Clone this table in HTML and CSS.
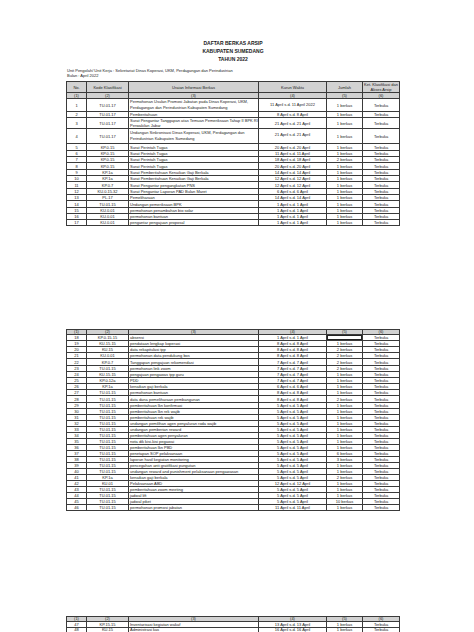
FILE: index.html
```html
<!DOCTYPE html>
<html lang="id">
<head>
<meta charset="utf-8">
<title>Daftar Berkas Arsip</title>
<link rel="stylesheet" href="styles.css">
</head>
<body>
<div class="page">
  <section class="sheet sheet1">
    <header class="title">
      <div>DAFTAR BERKAS ARSIP</div>
      <div>KABUPATEN SUMEDANG</div>
      <div>TAHUN 2022</div>
    </header>
    <div class="meta">
      <div>Unit Pengolah/ Unit Kerja : Sekretariat Dinas Koperasi, UKM, Perdagangan dan Perindustrian</div>
      <div>Bulan : April 2022</div>
    </div>
    <div class="tbl">
      <div class="row head">
        <div>No.</div><div>Kode Klasifikasi</div><div>Uraian Informasi Berkas</div><div>Kurun Waktu</div><div>Jumlah</div><div class="ml">Ket. Klasifikasi dan<br>Akses Arsip</div>
      </div>
      <div class="row nums"><div>(1)</div><div>(2)</div><div>(3)</div><div>(4)</div><div>(5)</div><div>(6)</div></div>
      <div class="row h13"><div>1</div><div>TU.01.17</div><div class="u ml">Permohonan Usulan Promosi Jabatan pada Dinas Koperasi, UKM,<br>Perdagangan dan Perindustrian Kabupaten Sumedang</div><div class="top">11 April s.d. 11 April 2022</div><div>1 berkas</div><div>Terbuka</div></div>
      <div class="row"><div>2</div><div>TU.01.17</div><div class="u">Pemberitahuan</div><div>8 April s.d. 8 April</div><div>1 berkas</div><div>Terbuka</div></div>
      <div class="row h11"><div>3</div><div>TU.01.17</div><div class="u ml">Surat Pengantar Tanggapan atas Temuan Pemeriksaan Tahap II BPK RI<br>Perwakilan Jabar</div><div class="top">21 April s.d. 21 April</div><div>1 berkas</div><div>Terbuka</div></div>
      <div class="row h15"><div>4</div><div>TU.01.17</div><div class="u ml">Undangan Sinkronisasi Dinas Koperasi, UKM, Perdagangan dan<br>Perindustrian Kabupaten Sumedang</div><div class="top">21 April s.d. 21 April</div><div>1 berkas</div><div>Terbuka</div></div>
      <div class="row h7"><div>5</div><div>KP.0.15</div><div class="u">Surat Perintah Tugas</div><div>20 April s.d. 20 April</div><div>1 berkas</div><div>Terbuka</div></div>
      <div class="row"><div>6</div><div>KP.0.15</div><div class="u">Surat Perintah Tugas</div><div>11 April s.d. 11 April</div><div>1 berkas</div><div>Terbuka</div></div>
      <div class="row"><div>7</div><div>KP.0.15</div><div class="u">Surat Perintah Tugas</div><div>18 April s.d. 18 April</div><div>2 berkas</div><div>Terbuka</div></div>
      <div class="row h7"><div>8</div><div>KP.0.15</div><div class="u">Surat Perintah Tugas</div><div>20 April s.d. 20 April</div><div>1 berkas</div><div>Terbuka</div></div>
      <div class="row"><div>9</div><div>KP.1a</div><div class="u">Surat Pemberitahuan Kenaikan Gaji Berkala</div><div>14 April s.d. 14 April</div><div>1 berkas</div><div>Terbuka</div></div>
      <div class="row"><div>10</div><div>KP.1a</div><div class="u">Surat Pemberitahuan Kenaikan Gaji Berkala</div><div>12 April s.d. 12 April</div><div>1 berkas</div><div>Terbuka</div></div>
      <div class="row h7"><div>11</div><div>KP.0.7</div><div class="u">Surat Pengantar pengangkatan PNS</div><div>12 April s.d. 12 April</div><div>1 berkas</div><div>Terbuka</div></div>
      <div class="row"><div>12</div><div>KU.0.15.32</div><div class="u">Surat Pengantar Laporan PAD Bulan Maret</div><div>6 April s.d. 6 April</div><div>1 berkas</div><div>Terbuka</div></div>
      <div class="row"><div>13</div><div>PL.17</div><div class="u">Pemeliharaan</div><div>14 April s.d. 14 April</div><div>1 berkas</div><div>Terbuka</div></div>
      <div class="row h7"><div>14</div><div>TU.01.15</div><div class="u">Undangan pemeriksaan BPK</div><div>1 April s.d. 1 April</div><div>1 berkas</div><div>Terbuka</div></div>
      <div class="row"><div>15</div><div>KU.0.01</div><div class="u">permohonan penambahan bio solar</div><div>1 April s.d. 1 April</div><div>1 berkas</div><div>Terbuka</div></div>
      <div class="row"><div>16</div><div>KU.0.01</div><div class="u">permohonan bantuan</div><div>1 April s.d. 1 April</div><div>1 berkas</div><div>Terbuka</div></div>
      <div class="row"><div>17</div><div>KU.0.01</div><div class="u">pengantar pengajuan proposal</div><div>1 April s.d. 1 April</div><div>1 berkas</div><div>Terbuka</div></div>
    </div>
  </section>

  <section class="sheet sheet2">
    <div class="tbl">
      <div class="row nums n5"><div>(1)</div><div>(2)</div><div>(3)</div><div>(4)</div><div>(5)</div><div>(6)</div></div>
      <div class="row"><div>18</div><div>KP.0.15.15</div><div class="u">absensi</div><div>1 April s.d. 1 April</div><div class="sel"></div><div>Terbuka</div></div>
      <div class="row"><div>19</div><div>KU.15.15</div><div class="u">pendataan lengkap koperasi</div><div>8 April s.d. 8 April</div><div>1 berkas</div><div>Terbuka</div></div>
      <div class="row"><div>20</div><div>KU.15</div><div class="u">data rekapitulasi tpp</div><div>8 April s.d. 8 April</div><div>2 berkas</div><div>Terbuka</div></div>
      <div class="row"><div>21</div><div>KU.0.01</div><div class="u">permohonan data pendukung bos</div><div>8 April s.d. 8 April</div><div>2 berkas</div><div>Terbuka</div></div>
      <div class="row h7"><div>22</div><div>KP.0.7</div><div class="u">Tanggapan pengajuan rekomendasi</div><div>7 April s.d. 7 April</div><div>2 berkas</div><div>Terbuka</div></div>
      <div class="row"><div>23</div><div>TU.01.15</div><div class="u">permohonan link zoom</div><div>7 April s.d. 7 April</div><div>2 berkas</div><div>Terbuka</div></div>
      <div class="row"><div>24</div><div>KU.15.15</div><div class="u">pengajuan pengawas tpp guru</div><div>7 April s.d. 7 April</div><div>1 berkas</div><div>Terbuka</div></div>
      <div class="row"><div>25</div><div>KP.0.12a</div><div class="u">PDD</div><div>7 April s.d. 7 April</div><div>1 berkas</div><div>Terbuka</div></div>
      <div class="row"><div>26</div><div>KP.1a</div><div class="u">kenaikan gaji berkala</div><div>6 April s.d. 6 April</div><div>1 berkas</div><div>Terbuka</div></div>
      <div class="row"><div>27</div><div>TU.01.15</div><div class="u">permohonan bantuan</div><div>8 April s.d. 8 April</div><div>1 berkas</div><div>Terbuka</div></div>
      <div class="row h7"><div>28</div><div>TU.01.15</div><div class="u">data dana pemeliharaan pembangunan</div><div>8 April s.d. 8 April</div><div>2 berkas</div><div>Terbuka</div></div>
      <div class="row"><div>29</div><div>TU.01.15</div><div class="u">pemberitahuan lkn konfirmasi</div><div>5 April s.d. 5 April</div><div>1 berkas</div><div>Terbuka</div></div>
      <div class="row"><div>30</div><div>TU.01.15</div><div class="u">pemberitahuan lkn rek wajib</div><div>5 April s.d. 5 April</div><div>1 berkas</div><div>Terbuka</div></div>
      <div class="row"><div>31</div><div>TU.01.15</div><div class="u">pemberitahuan rek wajib</div><div>5 April s.d. 5 April</div><div>1 berkas</div><div>Terbuka</div></div>
      <div class="row"><div>32</div><div>TU.01.15</div><div class="u">undangan pemilihan agen penyaluran roda wajib</div><div>5 April s.d. 5 April</div><div>1 berkas</div><div>Terbuka</div></div>
      <div class="row"><div>33</div><div>TU.01.15</div><div class="u">undangan pemberian reward</div><div>5 April s.d. 5 April</div><div>1 berkas</div><div>Terbuka</div></div>
      <div class="row"><div>34</div><div>TU.01.15</div><div class="u">pemberitahuan agen penyaluran</div><div>5 April s.d. 5 April</div><div>1 berkas</div><div>Terbuka</div></div>
      <div class="row"><div>35</div><div>TU.01.15</div><div class="u">nota dik kisi-kisi pegawai</div><div>5 April s.d. 5 April</div><div>1 berkas</div><div>Terbuka</div></div>
      <div class="row"><div>36</div><div>TU.01.15</div><div class="u">pemberitahuan lkn PBD</div><div>5 April s.d. 5 April</div><div>1 berkas</div><div>Terbuka</div></div>
      <div class="row"><div>37</div><div>TU.01.15</div><div class="u">penetapan SOP pelaksanaan</div><div>5 April s.d. 5 April</div><div>6 berkas</div><div>Terbuka</div></div>
      <div class="row"><div>38</div><div>TU.01.15</div><div class="u">laporan hasil kegiatan monitoring</div><div>5 April s.d. 5 April</div><div>3 berkas</div><div>Terbuka</div></div>
      <div class="row"><div>39</div><div>TU.01.15</div><div class="u">pencegahan anti gratifikasi pungutan</div><div>5 April s.d. 5 April</div><div>1 berkas</div><div>Terbuka</div></div>
      <div class="row"><div>40</div><div>TU.01.15</div><div class="u">undangan reward and punishment pelaksanaan pengawasan</div><div>5 April s.d. 5 April</div><div>1 berkas</div><div>Terbuka</div></div>
      <div class="row"><div>41</div><div>KP.1a</div><div class="u">kenaikan gaji berkala</div><div>5 April s.d. 5 April</div><div>2 berkas</div><div>Terbuka</div></div>
      <div class="row"><div>42</div><div>KU.01</div><div class="u">Pelaksanaan ABD</div><div>12 April s.d. 12 April</div><div>1 berkas</div><div>Terbuka</div></div>
      <div class="row"><div>43</div><div>TU.01.15</div><div class="u">pemberitahuan zoom meeting</div><div>5 April s.d. 5 April</div><div>1 berkas</div><div>Terbuka</div></div>
      <div class="row"><div>44</div><div>TU.01.15</div><div class="u">jadwal lift</div><div>5 April s.d. 5 April</div><div>1 berkas</div><div>Terbuka</div></div>
      <div class="row"><div>45</div><div>TU.01.15</div><div class="u">jadwal piket</div><div>5 April s.d. 5 April</div><div>10 berkas</div><div>Terbuka</div></div>
      <div class="row"><div>46</div><div>TU.01.15</div><div class="u">permohonan promosi jabatan</div><div>11 April s.d. 11 April</div><div>1 berkas</div><div>Terbuka</div></div>
    </div>
  </section>

  <section class="sheet sheet3">
    <div class="tbl">
      <div class="row nums n5"><div>(1)</div><div>(2)</div><div>(3)</div><div>(4)</div><div>(5)</div><div>(6)</div></div>
      <div class="row"><div>47</div><div>KP.15.15</div><div class="u">Inventarisasi kegiatan wakaf</div><div>13 April s.d. 13 April</div><div>1 berkas</div><div>Terbuka</div></div>
      <div class="row last"><div>48</div><div>KU.15</div><div class="u">Administrasi kas</div><div>16 April s.d. 16 April</div><div>1 berkas</div><div>Terbuka</div></div>
    </div>
  </section>
</div>
</body>
</html>
```

FILE: styles.css
```css
html, body {
  margin: 0;
  padding: 0;
  background: #ffffff;
  overflow: hidden;
}

body {
  font-family: "Liberation Sans Narrow", "Liberation Sans", Arial, sans-serif;
  color: #222222;
}

.page {
  width: 474px;
  height: 632px;
  overflow: hidden;
}

.sheet {
  width: 334px;
  margin-left: 66px;
}

.sheet1 {
  padding-top: 39px;
}

.sheet2 {
  margin-top: 103px;
}

.sheet3 {
  margin-top: 105px;
}

.title {
  text-align: center;
  font-weight: bold;
  font-size: 5px;
  line-height: 8px;
  color: #1a1a1a;
}

.meta {
  margin-top: 5px;
  font-size: 4px;
  line-height: 5px;
  padding-left: 1px;
}

.tbl {
  border-top: 1px solid #3a3a3a;
  border-left: 1px solid #3a3a3a;
}

.sheet1 .tbl {
  margin-top: 3px;
}

.row {
  display: grid;
  grid-template-columns: 20px 42px 130px 68px 36px 37px;
  height: 6px;
  font-size: 4px;
  line-height: 5px;
}

.row > div {
  border-right: 1px solid #3a3a3a;
  border-bottom: 1px solid #3a3a3a;
  display: flex;
  align-items: center;
  justify-content: center;
  text-align: center;
  overflow: hidden;
  white-space: nowrap;
}

.row > .u {
  justify-content: flex-start;
  text-align: left;
  padding-left: 1px;
}

.row > .ml {
  line-height: 5px;
}

.row > .top {
  align-items: flex-start;
  padding-top: 3px;
}

.head {
  height: 11px;
  background: #d2d2d2;
}

.nums {
  background: #d2d2d2;
}

.n5 {
  height: 5px;
  line-height: 4px;
}

.h7 { height: 7px; }
.h11 { height: 11px; }
.h13 { height: 13px; }
.h15 { height: 15px; }

.h13 > .ml { line-height: 6px; }
.h15 > .ml { line-height: 6px; }

.row.last {
  height: 5px;
  line-height: 4px;
}

.row > .sel {
  box-shadow: inset 0 0 0 1px #222222;
}
```
